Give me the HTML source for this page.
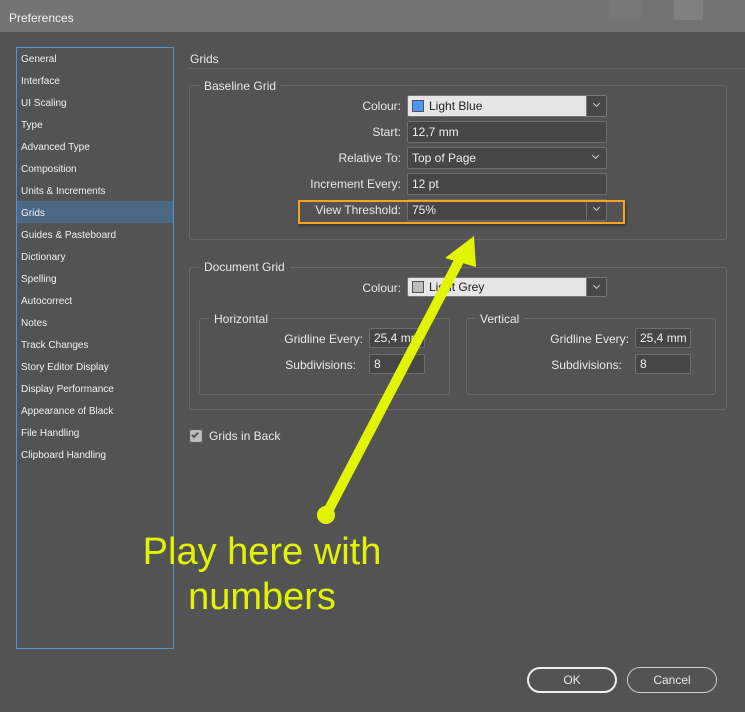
<!DOCTYPE html>
<html><head><style>
*{margin:0;padding:0;box-sizing:border-box}
body{width:745px;height:712px;background:#535353;font-family:"Liberation Sans",sans-serif;color:#e8e8e8;position:relative;overflow:hidden}
.a{position:absolute}
.t{position:absolute;white-space:nowrap;font-size:12px;line-height:14px}
.s{position:absolute;left:21px;font-size:10px;white-space:nowrap;line-height:12px;color:#f0f0f0}
.g{position:absolute;border:1px solid #686868;border-radius:3px}
.f{position:absolute;background:#464646;border:1px solid #6e6e6e;border-radius:2px;font-size:12px;line-height:18px;padding-left:4px;color:#eee;overflow:hidden;white-space:nowrap}
.lg{position:absolute;background:#535353;padding:0 5px;font-size:12px;line-height:14px}
.r{text-align:right}
.dd{position:absolute;background:#e6e6e6;border:1px solid #777;border-radius:2px;font-size:12px;line-height:18px;color:#222}
.ar{position:absolute;right:0;top:0;bottom:0;width:20px;background:#474747;border-left:1px solid #777}
.ar:after,.cv:after{content:"";position:absolute;left:7px;top:5px;width:4px;height:4px;border-right:1px solid #ccc;border-bottom:1px solid #ccc;transform:rotate(45deg)}
.cv{position:absolute;right:0;top:0;width:20px;height:100%}
.sw{position:absolute;left:4px;top:3px;width:12px;height:12px;border:1px solid #555}
</style></head><body>
<div class="a" style="left:0;top:0;width:745px;height:32px;background:#747474"></div>
<div class="a" style="left:609px;top:0;width:33px;height:20px;background:#777"></div>
<div class="a" style="left:674px;top:0;width:29px;height:20px;background:#808080"></div>
<div class="t" style="left:9px;top:11px;font-size:12px;color:#f2f2f2">Preferences</div>

<div class="a" style="left:16px;top:47px;width:158px;height:602px;border:1px solid #4f93dd"></div>
<div class="a" style="left:17px;top:201px;width:156px;height:22px;background:#4b6885"></div>
<div class="s" style="top:54px">General</div>
<div class="s" style="top:76px">Interface</div>
<div class="s" style="top:98px">UI Scaling</div>
<div class="s" style="top:120px">Type</div>
<div class="s" style="top:142px">Advanced Type</div>
<div class="s" style="top:164px">Composition</div>
<div class="s" style="top:186px">Units &amp; Increments</div>
<div class="s" style="top:208px">Grids</div>
<div class="s" style="top:230px">Guides &amp; Pasteboard</div>
<div class="s" style="top:252px">Dictionary</div>
<div class="s" style="top:274px">Spelling</div>
<div class="s" style="top:296px">Autocorrect</div>
<div class="s" style="top:318px">Notes</div>
<div class="s" style="top:340px">Track Changes</div>
<div class="s" style="top:362px">Story Editor Display</div>
<div class="s" style="top:384px">Display Performance</div>
<div class="s" style="top:406px">Appearance of Black</div>
<div class="s" style="top:428px">File Handling</div>
<div class="s" style="top:450px">Clipboard Handling</div>

<div class="t" style="left:190px;top:52px">Grids</div>
<div class="a" style="left:189px;top:68px;width:556px;height:1px;background:#666"></div>

<div class="g" style="left:189px;top:85px;width:538px;height:155px"></div>
<div class="lg" style="left:199px;top:79px">Baseline Grid</div>
<div class="t r" style="left:250px;width:151px;top:99px">Colour:</div>
<div class="dd" style="left:407px;top:95px;width:200px;height:22px;line-height:20px"><div class="sw" style="top:4px;background:#4e96f4"></div><span style="padding-left:21px">Light Blue</span><div class="ar"></div></div>
<div class="t r" style="left:250px;width:151px;top:125px">Start:</div>
<div class="f" style="left:407px;top:121px;width:200px;height:22px;line-height:20px">12,7 mm</div>
<div class="t r" style="left:250px;width:151px;top:151px">Relative To:</div>
<div class="f" style="left:407px;top:147px;width:200px;height:22px;line-height:20px">Top of Page<div class="cv"></div></div>
<div class="t r" style="left:250px;width:151px;top:177px">Increment Every:</div>
<div class="f" style="left:407px;top:173px;width:200px;height:22px;line-height:20px">12 pt</div>
<div class="t r" style="left:250px;width:151px;top:203px">View Threshold:</div>
<div class="f" style="left:407px;top:199px;width:200px;height:22px;line-height:20px">75%<div class="cv" style="border-left:1px solid #6e6e6e"></div></div>
<div class="a" style="left:298px;top:200px;width:327px;height:24px;border:2px solid #f5a41c;box-shadow:1px 2px 3px rgba(0,0,0,.4)"></div>

<div class="g" style="left:189px;top:267px;width:538px;height:143px"></div>
<div class="lg" style="left:199px;top:260px">Document Grid</div>
<div class="t r" style="left:250px;width:151px;top:281px">Colour:</div>
<div class="dd" style="left:407px;top:277px;width:200px;height:20px"><div class="sw" style="top:3px;background:#bdbdbd"></div><span style="padding-left:21px">Light Grey</span><div class="ar"></div></div>

<div class="g" style="left:199px;top:318px;width:251px;height:77px"></div>
<div class="lg" style="left:209px;top:312px">Horizontal</div>
<div class="t r" style="left:220px;width:143px;top:332px">Gridline Every:</div>
<div class="f" style="left:369px;top:328px;width:56px;height:20px">25,4 mm</div>
<div class="t r" style="left:220px;width:136px;top:358px">Subdivisions:</div>
<div class="f" style="left:369px;top:354px;width:56px;height:20px">8</div>

<div class="g" style="left:466px;top:318px;width:250px;height:77px"></div>
<div class="lg" style="left:475px;top:312px">Vertical</div>
<div class="t r" style="left:480px;width:149px;top:332px">Gridline Every:</div>
<div class="f" style="left:635px;top:328px;width:56px;height:20px">25,4 mm</div>
<div class="t r" style="left:480px;width:142px;top:358px">Subdivisions:</div>
<div class="f" style="left:635px;top:354px;width:56px;height:20px">8</div>

<div class="a" style="left:190px;top:430px;width:12px;height:12px;background:#bbb;border-radius:2px"></div>
<div class="a" style="left:193px;top:431px;width:4px;height:7px;border-right:2px solid #555;border-bottom:2px solid #555;transform:rotate(45deg)"></div>
<div class="t" style="left:209px;top:429px">Grids in Back</div>

<svg class="a" style="left:0;top:0" width="745" height="712">
<line x1="326" y1="515" x2="462" y2="255" stroke="#e1f500" stroke-width="10"/>
<polygon points="474,236 445,258 476,267" fill="#e1f500"/>
<circle cx="326" cy="515" r="9" fill="#e1f500"/>
</svg>
<div class="a" style="left:92px;top:530px;width:340px;text-align:center;font-size:38px;line-height:45px;color:#e1f500">Play here with<br>numbers</div>

<div class="a" style="left:527px;top:667px;width:90px;height:26px;border:2px solid #eee;border-radius:13px;text-align:center;font-size:12px;line-height:22px">OK</div>
<div class="a" style="left:627px;top:667px;width:90px;height:26px;border:1px solid #ccc;border-radius:13px;text-align:center;font-size:12px;line-height:24px">Cancel</div>
</body></html>
